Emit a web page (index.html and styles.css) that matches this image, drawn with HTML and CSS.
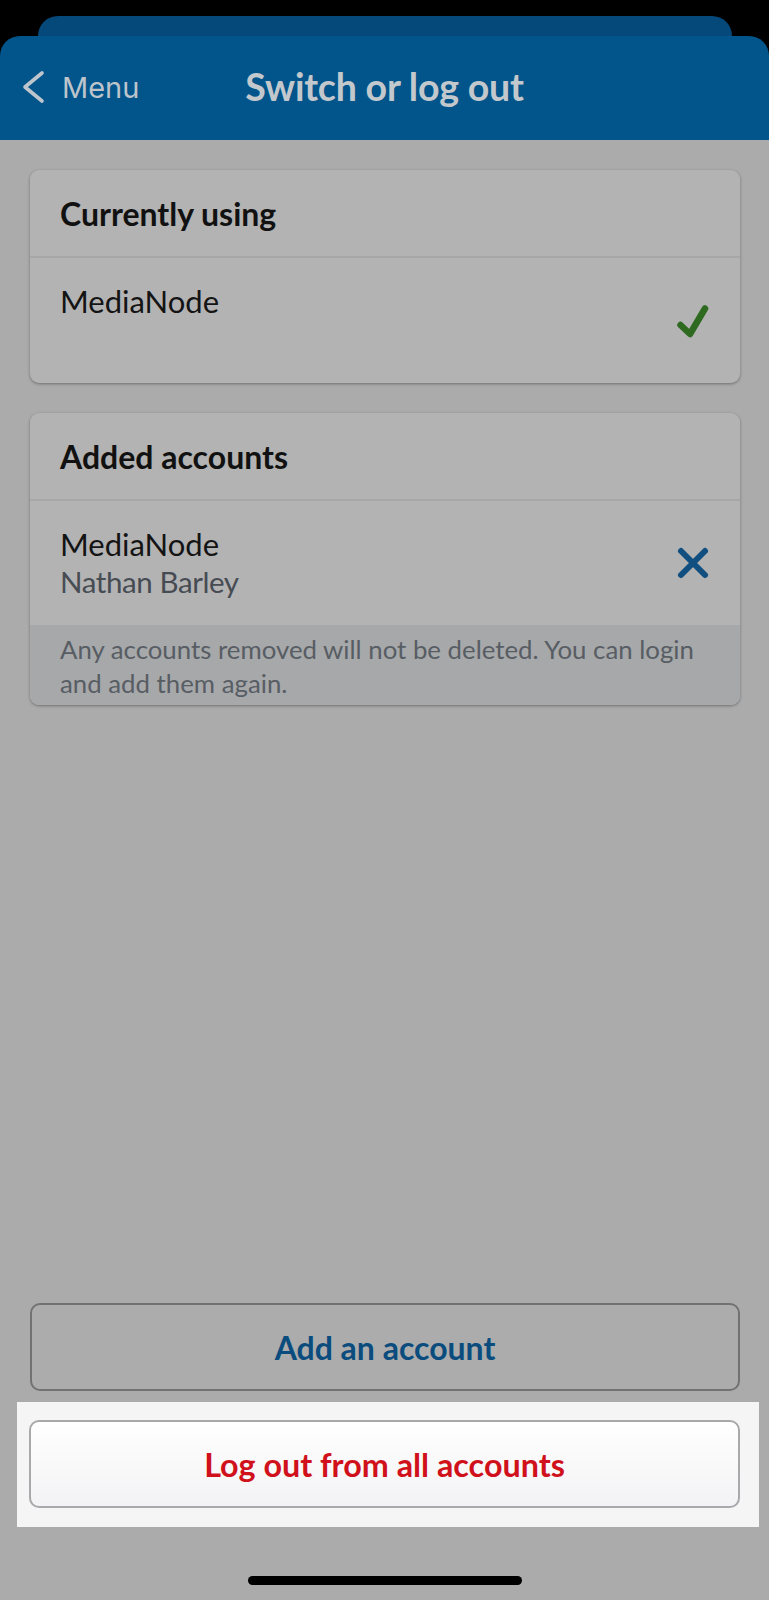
FILE: index.html
```html
<!DOCTYPE html>
<html>
<head>
<meta charset="utf-8">
<link rel="stylesheet" href="styles.css">
</head>
<body>
<div class="screen">
  <div class="status">
    <div class="back-sheet"></div>
  </div>
  <header class="nav">
    <div class="nav-left">
      <svg class="chev" width="24" height="34" viewBox="0 0 24 34"><polyline points="20,3 3,17 20,31" fill="none" stroke="#bec5cc" stroke-width="3.6" stroke-linecap="round" stroke-linejoin="round"/></svg>
      <span class="menu">Menu</span>
    </div>
    <h1 class="title">Switch or log out</h1>
    <div class="nav-right"></div>
  </header>
  <main class="content">
    <section class="card">
      <div class="card-head">Currently using</div>
      <div class="row">
        <div class="acct">
          <div class="acct-name">MediaNode</div>
        </div>
        <svg class="icon" width="34" height="34" viewBox="0 0 34 34"><path d="M4.5 21 L14 30 L29 4.5" fill="none" stroke="#2e6a20" stroke-width="6.5" stroke-linecap="round" stroke-linejoin="round"/></svg>
      </div>
    </section>
    <section class="card">
      <div class="card-head">Added accounts</div>
      <div class="row row-short">
        <div class="acct">
          <div class="acct-name">MediaNode</div>
          <div class="acct-user">Nathan Barley</div>
        </div>
        <svg class="icon" width="34" height="34" viewBox="0 0 34 34"><path d="M5 5 L29 29 M29 5 L5 29" fill="none" stroke="#104f80" stroke-width="6" stroke-linecap="round"/></svg>
      </div>
      <div class="card-note">Any accounts removed will not be deleted. You can login and add them again.</div>
    </section>
    <div class="spacer"></div>
    <button class="btn btn-add">Add an account</button>
    <div class="logout-panel">
      <button class="btn btn-logout">Log out from all accounts</button>
    </div>
    <div class="home-area"><div class="home-bar"></div></div>
  </main>
</div>
</body>
</html>
```
FILE: styles.css
```css
* { box-sizing: border-box; }
html, body { margin: 0; padding: 0; }
body {
  width: 769px;
  height: 1600px;
  background: #000;
  font-family: Lato, "Noto Sans", sans-serif;
  overflow: hidden;
}
.screen {
  display: flex;
  flex-direction: column;
  height: 1600px;
}
.status {
  height: 36px;
  background: #000;
  padding: 16px 37px 0 38px;
}
.back-sheet {
  height: 20px;
  background: #04497a;
  border-radius: 20px 20px 0 0;
}
.nav {
  height: 104px;
  background: #02558b;
  border-radius: 20px 20px 0 0;
  display: grid;
  grid-template-columns: 1fr auto 1fr;
  align-items: center;
  padding: 0 22px 4px;
}
.nav-left {
  display: flex;
  align-items: center;
  gap: 16px;
  padding-top: 2px;
}
.chev { display: block; }
.menu {
  font-family: Inter, "Liberation Sans", sans-serif;
  font-size: 29px;
  color: #bdc4cb;
  font-weight: 400;
}
.title {
  margin: 0;
  font-size: 37.5px;
  font-weight: 700;
  color: #c3c8cd;
  letter-spacing: -0.2px;
}
.content {
  flex: 1;
  background: #ababab;
  display: flex;
  flex-direction: column;
  padding-top: 30px;
}
.card {
  margin: 0 29px 30px 30px;
  background: #b3b3b3;
  border-radius: 9px;
  box-shadow: 0 1px 3px rgba(0,0,0,0.35);
  overflow: hidden;
}
.card-head {
  height: 88px;
  display: flex;
  align-items: center;
  padding: 0 30px;
  font-size: 32px;
  font-weight: 700;
  color: #111;
  border-bottom: 2px solid #a7a7a7;
}
.row {
  height: 125px;
  display: flex;
  align-items: center;
  justify-content: space-between;
  padding: 0 30px 0 30px;
}
.row-short { height: 124px; }
.acct {
  align-self: flex-start;
  padding-top: 24px;
  line-height: 38px;
  font-size: 31px;
}
.acct-name { color: #141414; }
.acct-user { color: #474c53; font-size: 29.5px; letter-spacing: -0.4px; }
.icon { display: block; }
.card-note {
  background: #a6a8aa;
  padding: 7px 30px 6px;
  font-size: 25.8px;
  line-height: 34px;
  color: #585d64;
  height: 80px;
}
.spacer { flex: 1; }
.btn {
  display: block;
  font-family: Lato, "Noto Sans", sans-serif;
  font-size: 32px;
  font-weight: 700;
  height: 88px;
  border-radius: 10px;
  cursor: pointer;
}
.btn-add {
  margin: 0 29px 11px 30px;
  background: #acacac;
  border: 2px solid #727272;
  color: #0a4c7d;
}
.logout-panel {
  margin: 0 10px 0 17px;
  background: #f5f5f6;
  padding: 18px 19px 19px 12px;
}
.btn-logout {
  width: 100%;
  font-size: 32.3px;
  background: linear-gradient(#ffffff, #f3f3f5);
  border: 2px solid #a9a9ab;
  color: #d0111b;
}
.home-area {
  height: 73px;
  display: flex;
  justify-content: center;
  padding-top: 49px;
}
.home-bar {
  width: 274px;
  height: 9px;
  background: #000;
  border-radius: 5px;
}
```
